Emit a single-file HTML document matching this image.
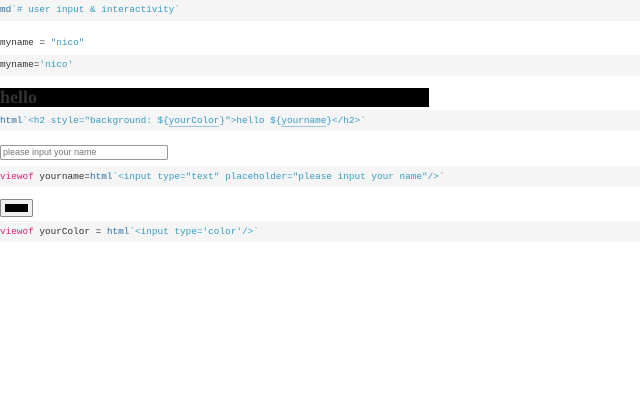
<!DOCTYPE html>
<html><head><style>
body{margin:0;width:640px;height:400px;background:#fff;overflow:hidden;font-family:"Liberation Mono",monospace;font-size:9.4px;color:#333}
.b{position:absolute;left:0;width:640px;height:21px;background:#f5f5f5}
.t{position:absolute;left:0;white-space:pre;line-height:12px}
.s{color:#3a9cc4}.k{color:#d6287a}.h{color:#2a6fa6}.u{border-bottom:1px solid #9cc4da}
</style></head><body>
<div class="b" style="top:0"></div>
<div class="t" style="top:4px"><span class="h">md</span><span class="s">`# user input &amp; interactivity`</span></div>
<div class="t" style="top:37px">myname = <span class="s">"nico"</span></div>
<div class="b" style="top:55px"></div>
<div class="t" style="top:59px">myname=<span class="s">'nico'</span></div>
<div style="position:absolute;left:0;top:88px;width:429px;height:19px;background:#000;color:#333;font:bold 18px 'Liberation Serif',serif;line-height:19px">hello</div>
<div class="b" style="top:110px"></div>
<div class="t" style="top:115px"><span class="h">html</span><span class="s">`&lt;h2 style="background: ${<span class="u">yourColor</span>}"&gt;hello ${<span class="u">yourname</span>}&lt;/h2&gt;`</span></div>
<div style="position:absolute;left:0;top:145px;width:164px;height:13px;border:1px solid #999;border-radius:2px;font:9px 'Liberation Sans',sans-serif;color:#777;line-height:13px;padding-left:2px;box-sizing:content-box">please input your name</div>
<div class="b" style="top:166px"></div>
<div class="t" style="top:171px"><span class="k">viewof</span> yourname=<span class="h">html</span><span class="s">`&lt;input type="text" placeholder="please input your name"/&gt;`</span></div>
<div style="position:absolute;left:0;top:199px;width:31px;height:16px;border:1px solid #888;border-radius:2px;background:#efefef"><div style="position:absolute;left:4px;top:4px;width:23px;height:8px;background:#000"></div></div>
<div class="b" style="top:221px"></div>
<div class="t" style="top:226px"><span class="k">viewof</span> yourColor = <span class="h">html</span><span class="s">`&lt;input type='color'/&gt;`</span></div>
</body></html>
